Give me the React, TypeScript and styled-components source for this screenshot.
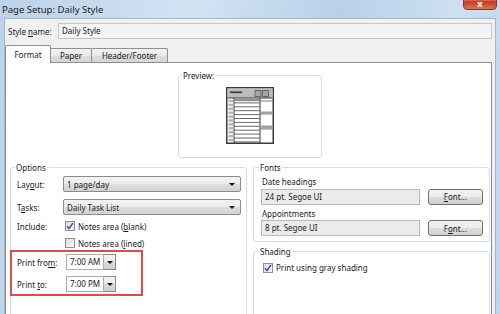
import React from "react";
import styled, { createGlobalStyle } from "styled-components";

const GlobalStyle = createGlobalStyle`
  html, body {
    margin: 0;
    padding: 0;
  }
  body {
    font-family: "Noto Sans", "DejaVu Sans", sans-serif;
    font-size: 8px;
    color: #1a1a1a;
  }
  u {
    text-decoration-thickness: 1px;
    text-underline-offset: 1px;
  }
`;

const PreviewPage = () => {
    const rows = Array.from({ length: 11 }, (_, i) => i);
    return (
        <svg width="48" height="57" viewBox="0 0 48 57">
            <rect x="0.75" y="0.75" width="46.5" height="55.5" fill="#fff" stroke="#3a3a3a" strokeWidth="1.5" />
            <rect x="1.5" y="1.5" width="45" height="9.5" fill="#bcbcbc" />
            <line x1="1.5" y1="11" x2="46.5" y2="11" stroke="#3a3a3a" strokeWidth="1" />
            <rect x="4" y="4.5" width="12" height="1.6" fill="#333" />
            <rect x="29" y="3.5" width="6" height="6" fill="#a6a6a6" stroke="#555" strokeWidth="0.8" />
            <rect x="36.5" y="3.5" width="6" height="6" fill="#a6a6a6" stroke="#555" strokeWidth="0.8" />
            <rect x="8.5" y="12" width="25" height="2.2" fill="#8f8f8f" />
            {rows.map((i) => (
                <rect key={`b${i}`} x="2.5" y={12.8 + i * 3.9} width="4.5" height="2.4" fill="#b3b3b3" />
            ))}
            {rows.map((i) => (
                <line key={`l${i}`} x1="8" y1={15.9 + i * 3.9} x2="33.5" y2={15.9 + i * 3.9} stroke="#444" strokeWidth="0.8" />
            ))}
            <line x1="8" y1="11" x2="8" y2="56" stroke="#333" strokeWidth="0.9" />
            <line x1="34" y1="11" x2="34" y2="56" stroke="#333" strokeWidth="1" />
            <line x1="34" y1="14" x2="46.5" y2="14" stroke="#555" strokeWidth="0.8" />
            <rect x="34.5" y="24.5" width="12" height="2" fill="#a0a0a0" />
            <line x1="34" y1="27" x2="46.5" y2="27" stroke="#555" strokeWidth="0.7" />
            <rect x="34.5" y="38.5" width="12" height="3" fill="#a0a0a0" />
            <line x1="34" y1="42" x2="46.5" y2="42" stroke="#555" strokeWidth="0.7" />
        </svg>
    );
};

const CheckMark = () => (
    <svg width="8" height="8" viewBox="0 0 8 8">
        <path d="M1 4.2 L3 6.6 L7 1" fill="none" stroke="#3d5796" strokeWidth="1.5" />
    </svg>
);

function CheckBox({ checked }: { checked?: boolean }) {
    return <Box>{checked && <CheckMark />}</Box>;
}

function Combo({ value }: { value: string }) {
    return (
        <ComboBox>
            <span>{value}</span>
            <Arrow />
        </ComboBox>
    );
}

function TimePicker({ value }: { value: string }) {
    return (
        <TimeWrap>
            <TimeText>{value}</TimeText>
            <TimeButton>
                <Arrow />
            </TimeButton>
        </TimeWrap>
    );
}

function App() {
    return (
        <>
            <GlobalStyle />
            <Window>
                <TitleBar>
                    <Title>Page Setup: Daily Style</Title>
                    <CloseButton>x</CloseButton>
                </TitleBar>
                <Frame>
                    <Body>
                        <StyleRow>
                            <StyleLabel>Style <u>n</u>ame:</StyleLabel>
                            <StyleInput>Daily Style</StyleInput>
                        </StyleRow>
                        <TabStrip>
                            <Tab active width={46}>Format</Tab>
                            <Tab width={42}>Paper</Tab>
                            <Tab width={77}>Header/Footer</Tab>
                        </TabStrip>
                        <Panel>
                            <PreviewGroup>
                                <Legend>Preview:</Legend>
                                <PreviewInner>
                                    <PreviewPage />
                                </PreviewInner>
                            </PreviewGroup>
                            <Columns>
                                <OptionsGroup>
                                    <Legend>Options</Legend>
                                    <Row>
                                        <RowLabel>Lay<u>o</u>ut:</RowLabel>
                                        <Combo value="1 page/day" />
                                    </Row>
                                    <Row gap={7}>
                                        <RowLabel>T<u>a</u>sks:</RowLabel>
                                        <Combo value="Daily Task List" />
                                    </Row>
                                    <CheckRow gap={5}>
                                        <RowLabel>Include:</RowLabel>
                                        <CheckItem>
                                            <CheckBox checked />
                                            <span>Notes area (<u>b</u>lank)</span>
                                        </CheckItem>
                                    </CheckRow>
                                    <CheckRow gap={5}>
                                        <RowLabel />
                                        <CheckItem>
                                            <CheckBox />
                                            <span>Notes area (<u>l</u>ined)</span>
                                        </CheckItem>
                                    </CheckRow>
                                    <Highlight>
                                        <Row>
                                            <TimeLabel>Print fro<u>m</u>:</TimeLabel>
                                            <TimePicker value="7:00 AM" />
                                        </Row>
                                        <Row gap={6}>
                                            <TimeLabel>Print <u>t</u>o:</TimeLabel>
                                            <TimePicker value="7:00 PM" />
                                        </Row>
                                    </Highlight>
                                </OptionsGroup>
                                <RightColumn>
                                    <FontsGroup>
                                        <Legend>Fonts</Legend>
                                        <FontLabel>Date headings</FontLabel>
                                        <FontRow>
                                            <FontInput>24 pt. Segoe UI</FontInput>
                                            <Button><u>F</u>ont...</Button>
                                        </FontRow>
                                        <FontLabel gap={3}>Appointments</FontLabel>
                                        <FontRow>
                                            <FontInput>8 pt. Segoe UI</FontInput>
                                            <Button>F<u>o</u>nt...</Button>
                                        </FontRow>
                                    </FontsGroup>
                                    <ShadingGroup>
                                        <Legend>Shading</Legend>
                                        <CheckItem>
                                            <CheckBox checked />
                                            <span>Print using gray shading</span>
                                        </CheckItem>
                                    </ShadingGroup>
                                </RightColumn>
                            </Columns>
                        </Panel>
                    </Body>
                </Frame>
            </Window>
        </>
    );
}

const Window = styled.div`
  width: 500px;
  height: 314px;
  overflow: hidden;
  display: flex;
  flex-direction: column;
  background: linear-gradient(100deg, #bcd2e9 0%, #d2e3f3 35%, #b9d0e9 62%, #cde0f2 82%, #bfd5ec 100%);
`;

const TitleBar = styled.div`
  height: 18px;
  flex: none;
  display: flex;
  align-items: center;
  padding-left: 2px;
`;

const Title = styled.span`
  font-size: 9.5px;
  color: #1c1c1c;
`;

const CloseButton = styled.div`
  margin-left: auto;
  margin-right: 3px;
  align-self: flex-start;
  margin-top: -8px;
  width: 34px;
  height: 18px;
  box-sizing: border-box;
  border: 1px solid #8a3423;
  border-radius: 0 0 4px 4px;
  background: linear-gradient(#eab3a3 0%, #d6694e 45%, #c43d22 55%, #dc7257 100%);
  color: #fff;
  font-family: "DejaVu Sans", sans-serif;
  font-weight: bold;
  font-size: 9px;
  display: flex;
  align-items: flex-end;
  justify-content: center;
  line-height: 10px;
`;

const Frame = styled.div`
  flex: 1;
  display: flex;
  padding: 0 4px;
`;

const Body = styled.div`
  flex: 1;
  display: flex;
  flex-direction: column;
  background: #f0f0f0;
  border: 1px solid #a3b6ca;
  border-bottom: none;
`;

const StyleRow = styled.div`
  display: flex;
  align-items: center;
  padding: 4px 3px 0 3px;
`;

const StyleLabel = styled.span`
  width: 50px;
`;

const StyleInput = styled.div`
  flex: 1;
  height: 16px;
  box-sizing: border-box;
  border: 1px solid #c6c6c6;
  background: #f4f4f4;
  padding-left: 3px;
  line-height: 14px;
`;

const TabStrip = styled.div`
  display: flex;
  align-items: flex-end;
  height: 17px;
  margin-top: 6px;
`;

const Tab = styled.div<{ active?: boolean; width: number }>`
  width: ${(p) => p.width}px;
  box-sizing: border-box;
  height: ${(p) => (p.active ? 18 : 14)}px;
  margin-bottom: ${(p) => (p.active ? -1 : 0)}px;
  margin-left: ${(p) => (p.active ? 0 : -1)}px;
  border: 1px solid #8d8f93;
  border-bottom: none;
  border-radius: 2px 2px 0 0;
  background: ${(p) => (p.active ? "#fff" : "linear-gradient(#f3f3f3, #e8e8e8 50%, #dcdcdc 51%, #d6d6d6)")};
  position: relative;
  z-index: ${(p) => (p.active ? 2 : 1)};
  display: flex;
  align-items: center;
  justify-content: center;
  padding-bottom: ${(p) => (p.active ? 1 : 0)}px;
`;

const Panel = styled.div`
  flex: 1;
  margin-right: 3px;
  background: #fff;
  border: 1px solid #8d8f93;
  border-bottom: none;
  padding: 0 1px 0 4px;
  display: flex;
  flex-direction: column;
`;

const Group = styled.fieldset`
  margin: 0;
  min-width: 0;
  border: 1px solid #d5dde3;
  border-radius: 3px;
`;

const Legend = styled.legend`
  padding: 0 1px;
  margin-left: -2px;
  line-height: 11px;
  font-size: 8px;
`;

const PreviewGroup = styled(Group)`
  width: 144px;
  box-sizing: border-box;
  margin: 7px 0 0 168px;
  padding: 6px 0 13px 5px;
`;

const PreviewInner = styled.div`
  display: flex;
  justify-content: center;
  margin-left: -5px;
`;

const Columns = styled.div`
  display: grid;
  grid-template-columns: 237px 237px;
  column-gap: 6px;
  margin-top: 4px;
  flex: 1;
`;

const OptionsGroup = styled(Group)`
  padding: 3px 5px 20px 6px;
  display: flex;
  flex-direction: column;
`;

const Row = styled.div<{ gap?: number }>`
  display: flex;
  align-items: center;
  height: 16px;
  margin-top: ${(p) => p.gap || 0}px;
`;

const CheckRow = styled(Row)`
  height: 12px;
`;

const RowLabel = styled.span`
  width: 46px;
  flex: none;
`;

const TimeLabel = styled.span`
  width: 49px;
  flex: none;
`;

const ComboBox = styled.div`
  flex: 1;
  height: 16px;
  box-sizing: border-box;
  border: 1px solid #8c8c8c;
  border-radius: 2px;
  background: linear-gradient(#f3f3f3 0%, #ebebeb 50%, #dedede 51%, #d3d3d3 100%);
  display: flex;
  align-items: center;
  justify-content: space-between;
  padding: 0 5px 0 3px;
`;

const Arrow = styled.span`
  width: 0;
  height: 0;
  border-left: 3px solid transparent;
  border-right: 3px solid transparent;
  border-top: 3px solid #111;
`;

const CheckItem = styled.div`
  display: flex;
  align-items: center;
  gap: 3px;
  padding-left: 2px;
`;

const Box = styled.span`
  width: 10px;
  height: 10px;
  box-sizing: border-box;
  border: 1px solid #8e8f8f;
  background: linear-gradient(135deg, #dcdcdc, #f8f8f8);
  display: flex;
  align-items: center;
  justify-content: center;
`;

const Highlight = styled.div`
  width: 133px;
  box-sizing: border-box;
  margin: 1px 0 0 -7px;
  border: 2px solid #dd4c47;
  padding: 2px 0 2px 5px;
`;

const TimeWrap = styled.div`
  display: flex;
  align-items: center;
  height: 16px;
`;

const TimeText = styled.div`
  width: 38px;
  height: 16px;
  box-sizing: border-box;
  border: 1px solid #abadb3;
  background: #fff;
  line-height: 14px;
  padding-left: 3px;
`;

const TimeButton = styled.div`
  width: 12px;
  height: 16px;
  box-sizing: border-box;
  border: 1px solid #8c8c8c;
  border-left: none;
  background: linear-gradient(#f3f3f3 0%, #e9e9e9 50%, #dadada 51%, #cfcfcf 100%);
  display: flex;
  align-items: center;
  justify-content: center;
`;

const RightColumn = styled.div`
  display: flex;
  flex-direction: column;
`;

const FontsGroup = styled(Group)`
  padding: 3px 6px 5px 7px;
  display: flex;
  flex-direction: column;
`;

const FontLabel = styled.div<{ gap?: number }>`
  line-height: 11px;
  margin: ${(p) => p.gap || 0}px 0 0 1px;
`;

const FontRow = styled.div`
  display: flex;
  align-items: center;
  gap: 8px;
  margin-top: 1.5px;
`;

const FontInput = styled.div`
  width: 159px;
  height: 16px;
  box-sizing: border-box;
  border: 1px solid #b9b9b9;
  background: #ebebeb;
  line-height: 14px;
  padding-left: 3px;
`;

const Button = styled.div`
  width: 55px;
  height: 16px;
  box-sizing: border-box;
  border: 1px solid #707070;
  border-radius: 3px;
  background: linear-gradient(#f2f2f2 0%, #ebebeb 50%, #dddddd 51%, #cfcfcf 100%);
  display: flex;
  align-items: center;
  justify-content: center;
`;

const ShadingGroup = styled(Group)`
  flex: 1;
  margin-top: 4px;
  padding: 5px 7px 20px 7px;
`;

export default App;
